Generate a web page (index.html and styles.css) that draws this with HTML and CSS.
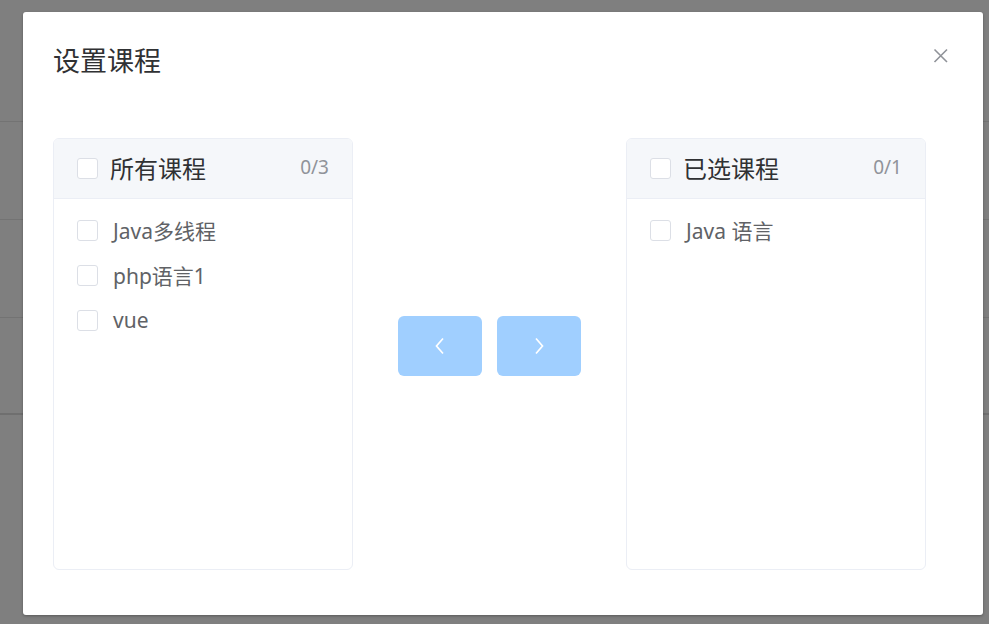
FILE: index.html
```html
<!DOCTYPE html>
<html lang="zh-CN">
<head>
<meta charset="utf-8">
<title>设置课程</title>
<link rel="stylesheet" href="styles.css">
</head>
<body>
<div class="page">
  <div class="row r1"></div>
  <div class="row r2"></div>
  <div class="row r3"></div>
  <div class="row r4"></div>
</div>
<div class="mask">
  <div class="dialog">
    <div class="dialog-header">
      <span class="dialog-title">设置课程</span>
      <span class="close" aria-label="关闭">
        <svg width="24" height="24" viewBox="0 0 24 24"><path d="M5.5 5.5 L18 18 M18 5.5 L5.5 18" stroke="#909399" stroke-width="1.6" fill="none"/></svg>
      </span>
    </div>
    <div class="dialog-body">
      <div class="transfer">
        <div class="panel">
          <div class="panel-header">
            <span class="cb"></span>
            <span class="panel-title">所有课程</span>
            <span class="count">0/3</span>
          </div>
          <div class="panel-body">
            <div class="item"><span class="cb"></span><span class="item-label">Java多线程</span></div>
            <div class="item"><span class="cb"></span><span class="item-label">php语言1</span></div>
            <div class="item"><span class="cb"></span><span class="item-label">vue</span></div>
          </div>
        </div>
        <div class="buttons">
          <span class="btn"><svg width="12" height="18" viewBox="0 0 12 18"><path d="M9 1.5 L2.5 9 L9 16.5" stroke="#fff" stroke-width="1.7" fill="none"/></svg></span>
          <span class="btn"><svg width="12" height="18" viewBox="0 0 12 18"><path d="M3 1.5 L9.5 9 L3 16.5" stroke="#fff" stroke-width="1.7" fill="none"/></svg></span>
        </div>
        <div class="panel">
          <div class="panel-header">
            <span class="cb"></span>
            <span class="panel-title">已选课程</span>
            <span class="count">0/1</span>
          </div>
          <div class="panel-body">
            <div class="item"><span class="cb"></span><span class="item-label">Java 语言</span></div>
          </div>
        </div>
      </div>
    </div>
  </div>
</div>
</body>
</html>
```
FILE: styles.css
```css
html, body {
  margin: 0;
  padding: 0;
}
body {
  width: 989px;
  height: 624px;
  overflow: hidden;
  background: #7f7f7f;
  font-family: "Noto Sans", "Noto Sans CJK SC", sans-serif;
  position: relative;
}
.page {
  padding-top: 24px;
}
.row {
  height: 97px;
  border-bottom: 1px solid #737373;
}
.row.r4 { height: 95px; border-bottom: 2px solid #6f6f6f; }

.mask {
  position: absolute;
  left: 0;
  top: 0;
  right: 0;
  bottom: 0;
}
.dialog {
  margin: 12px 0 0 23px;
  width: 960px;
  background: #fff;
  border-radius: 3px;
  box-shadow: 0 1px 3px rgba(0, 0, 0, 0.3);
}
.dialog-header {
  padding: 30px 30px 15px;
  display: flex;
  justify-content: space-between;
  align-items: center;
  height: 36px;
}
.dialog-title {
  font-size: 27px;
  line-height: 36px;
  color: #303133;
  margin-top: 2px;
}
.close {
  display: flex;
  width: 24px;
  height: 24px;
  margin-top: -9px;
}
.dialog-body {
  padding: 45px 30px 45px;
}
.transfer {
  display: flex;
  align-items: flex-start;
}
.panel {
  width: 298px;
  border: 1px solid #ebeef5;
  border-radius: 6px;
  overflow: hidden;
  background: #fff;
}
.panel-header {
  height: 59px;
  background: #f5f7fa;
  border-bottom: 1px solid #ebeef5;
  display: flex;
  align-items: center;
  padding: 0 23px 0 23px;
}
.cb {
  width: 19px;
  height: 19px;
  border: 1px solid #dcdfe6;
  border-radius: 3px;
  background: #fff;
  flex: none;
}
.panel-title {
  margin-left: 12px;
  font-size: 24px;
  color: #303133;
  flex: 1;
  margin-top: -3px;
}
.count {
  font-size: 19px;
  color: #909399;
  margin-top: -3px;
}
.panel-body {
  height: 361px;
  padding-top: 9px;
}
.item {
  height: 45px;
  display: flex;
  align-items: center;
  padding-left: 23px;
}
.item-label {
  margin-left: 15px;
  font-size: 21px;
  color: #606266;
  margin-top: -1px;
}
.buttons {
  display: flex;
  gap: 15px;
  margin: 178px 45px 0;
}
.btn {
  width: 84px;
  height: 60px;
  border-radius: 6px;
  background: #a0cfff;
  display: flex;
  align-items: center;
  justify-content: center;
}
```
